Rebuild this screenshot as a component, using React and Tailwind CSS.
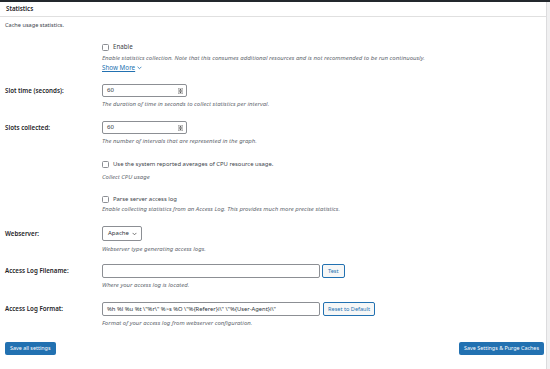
import React from "react";

const font = { fontFamily: '"Noto Sans", "Open Sans", sans-serif' };

function Checkbox() {
  return <span className="inline-block w-[7px] h-[7px] border border-[#8c8f94] rounded-[1.5px] bg-white mr-[4px] shrink-0" />;
}

function NumberInput({ value }) {
  return (
    <div className="w-[85px] h-[13px] border border-[#8c8f94] rounded-[2px] bg-white flex items-center justify-between pl-[4px] pr-[3px] text-[6px] text-[#2c3338]">
      <span>{value}</span>
      <svg width="5" height="6" viewBox="0 0 5 6">
        <rect x="0.25" y="0.25" width="4.5" height="5.5" fill="#eee" stroke="#999" strokeWidth="0.5" />
        <path d="M1 2.4 L2.5 1 L4 2.4Z M1 3.6 L2.5 5 L4 3.6Z" fill="#333" />
      </svg>
    </div>
  );
}

function Desc({ children, className = "" }) {
  return <div className={"text-[6px] italic text-[#646970] leading-[8px] " + className}>{children}</div>;
}

function Row({ label, children, className = "", labelPt = "pt-[3px]" }) {
  return (
    <div className={"grid grid-cols-[97px_1fr] pl-[5px] " + className}>
      <div className={"text-[6.2px] font-semibold text-[#1d2327] leading-[8px] " + labelPt}>{label}</div>
      <div>{children}</div>
    </div>
  );
}

export default function App() {
  return (
    <div className="w-[550px] h-[369px] bg-[#f0f0f1] overflow-hidden" style={font}>
      <div className="h-[2px] bg-[#23282d]" />
      <div className="w-[547px] h-[367px] bg-white border-r border-[#dcdcde] flex flex-col">
        <div className="h-[15px] border-b border-[#e0e0e0] pl-[6px] flex items-center text-[6.2px] font-semibold text-[#1d2327]">Statistics</div>
        <div className="pl-[5px] pt-[4px] text-[5.6px] text-[#3c434a] leading-[8px]">Cache usage statistics.</div>

        <Row label="" className="mt-[14px]">
          <div className="flex items-center text-[6.2px] text-[#3c434a] leading-[8px]"><Checkbox />Enable</div>
          <Desc className="mt-[3px]">Enable statistics collection. Note that this consumes additional resources and is not recommended to be run continuously.</Desc>
          <div className="text-[6.3px] text-[#2271b1] underline leading-[11px] flex items-center gap-[2px]">Show More
            <svg width="5" height="4" viewBox="0 0 5 4"><path d="M0.6 0.8 L2.5 2.7 L4.4 0.8" fill="none" stroke="#2271b1" strokeWidth="0.8" /></svg>
          </div>
        </Row>

        <Row label="Slot time (seconds):" className="mt-[11px]">
          <NumberInput value="60" />
          <Desc className="mt-[3px]">The duration of time in seconds to collect statistics per interval.</Desc>
        </Row>

        <Row label="Slots collected:" className="mt-[13px]">
          <NumberInput value="60" />
          <Desc className="mt-[3px]">The number of intervals that are represented in the graph.</Desc>
        </Row>

        <Row label="" className="mt-[15px]">
          <div className="flex items-center text-[5.9px] text-[#3c434a] leading-[8px]"><Checkbox />Use the system reported averages of CPU resource usage.</div>
          <Desc className="mt-[5px]">Collect CPU usage</Desc>
        </Row>

        <Row label="" className="mt-[14px]">
          <div className="flex items-center text-[5.9px] text-[#3c434a] leading-[8px]"><Checkbox />Parse server access log</div>
          <Desc className="mt-[2px]">Enable collecting statistics from an Access Log. This provides much more precise statistics.</Desc>
        </Row>

        <Row label="Webserver:" className="mt-[13px]" labelPt="pt-[4px]">
          <div className="w-[40px] h-[15px] border border-[#8c8f94] rounded-[2px] bg-white flex items-center justify-between pl-[5px] pr-[4px] text-[6px] text-[#2c3338]">
            <span>Apache</span>
            <svg width="5" height="4" viewBox="0 0 5 4"><path d="M0.6 0.9 L2.5 2.8 L4.4 0.9" fill="none" stroke="#555" strokeWidth="0.8" /></svg>
          </div>
          <Desc className="mt-[4px]">Webserver type generating access logs.</Desc>
        </Row>

        <Row label="Access Log Filename:" className="mt-[11px]">
          <div className="flex items-center gap-[2px]">
            <div className="w-[218px] h-[14px] border border-[#8c8f94] rounded-[2px] bg-white" />
            <div className="h-[14px] px-[5px] border border-[#2271b1] rounded-[2px] bg-[#f6f7f7] text-[#2271b1] text-[5.6px] flex items-center">Test</div>
          </div>
          <Desc className="mt-[3px]">Where your access log is located.</Desc>
        </Row>

        <Row label="Access Log Format:" className="mt-[13px]">
          <div className="flex items-center gap-[3px]">
            <div className="w-[218px] h-[14px] border border-[#8c8f94] rounded-[2px] bg-white flex items-center pl-[4px] text-[5.8px] text-[#2c3338] whitespace-nowrap overflow-hidden">%h %l %u %t \"%r\" %&gt;s %O \"%&#123;Referer&#125;i\" \"%&#123;User-Agent&#125;i\"</div>
            <div className="h-[14px] px-[4px] border border-[#2271b1] rounded-[2px] bg-[#f6f7f7] text-[#2271b1] text-[5.6px] flex items-center">Reset to Default</div>
          </div>
          <Desc className="mt-[3px]">Format of your access log from webserver configuration.</Desc>
        </Row>

        <div className="flex justify-between pl-[5px] pr-[2px] mt-[15px]">
          <div className="h-[13px] px-[5px] bg-[#2271b1] rounded-[2px] text-white text-[5.4px] flex items-center">Save all settings</div>
          <div className="h-[13px] px-[5px] bg-[#2271b1] rounded-[2px] text-white text-[5.4px] flex items-center">Save Settings &amp; Purge Caches</div>
        </div>
      </div>
    </div>
  );
}
